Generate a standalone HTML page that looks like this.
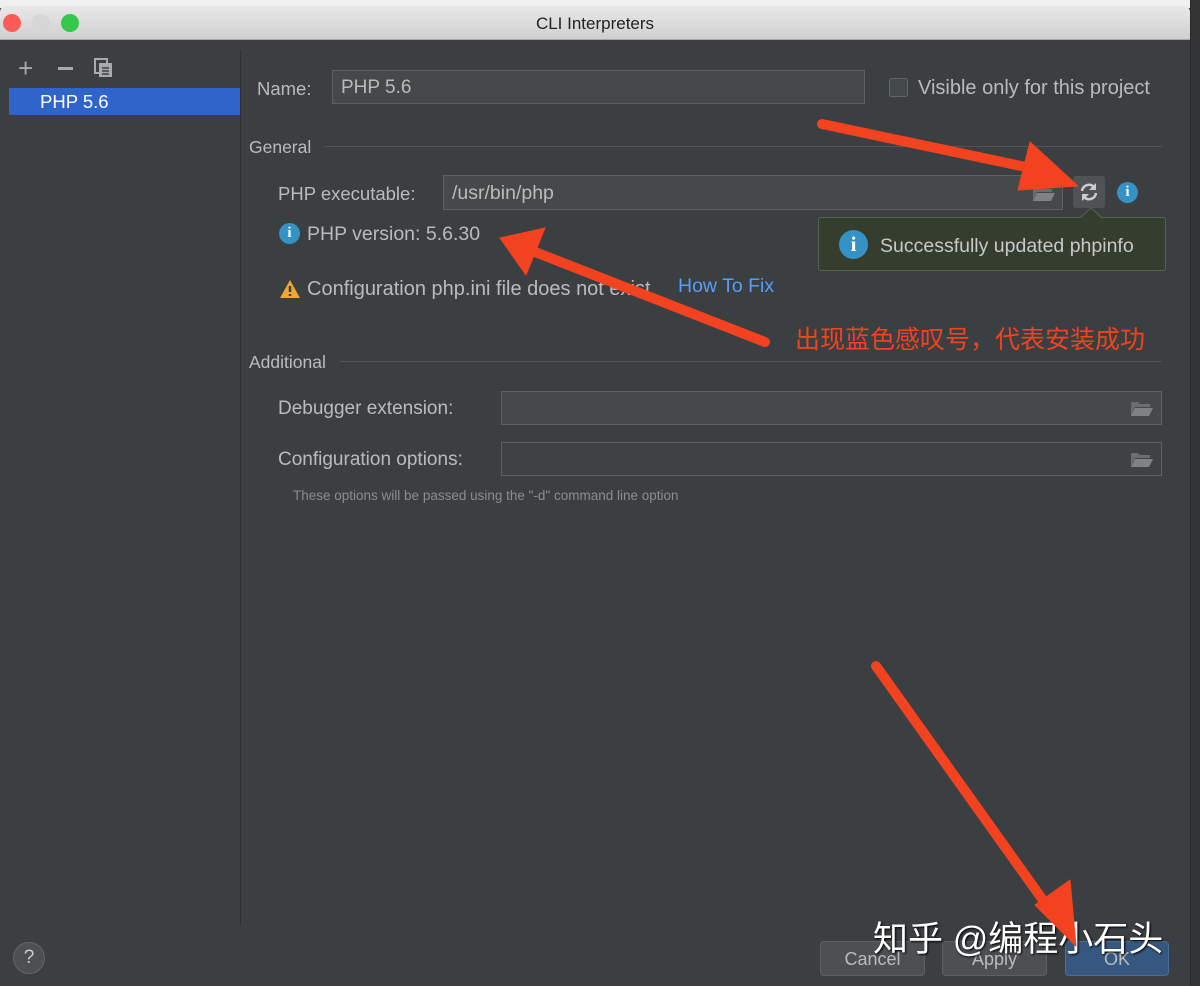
<!DOCTYPE html>
<html><head><meta charset="utf-8"><style>
*{margin:0;padding:0;box-sizing:border-box}
body{width:1200px;height:986px;overflow:hidden;background:#3c3f41;font-family:"Liberation Sans","Noto Sans CJK SC",sans-serif;color:#bbbbbb;position:relative}
.abs{position:absolute}
.title{left:0;top:6px;width:1190px;height:34px;background:linear-gradient(#e8e8e8,#d0d0d0);border-bottom:1px solid #a8a8a8;text-align:center;font-size:17px;color:#222;line-height:36px;border-radius:6px 6px 0 0}
.dot{width:18px;height:18px;border-radius:50%;top:14px}
.field{background:#45494a;border:1px solid #5e6163}
.lbl{font-size:18.5px;color:#bbbbbb}
.btn{top:941px;height:35px;border:1px solid #5e6163;border-radius:4px;background:#4c5052;font-size:18px;color:#bbb;text-align:center;line-height:35px}
</style></head><body>
<div class="abs" style="left:0;top:0;width:1200px;height:8px;background:#f0f0f0"></div>
<div class="abs" style="left:1190px;top:0;width:10px;height:986px;background:#323436;border-left:1px solid #2a2a2a"></div>
<div class="abs title">CLI Interpreters</div>
<div class="abs dot" style="left:3px;background:#fc5b57"></div>
<div class="abs dot" style="left:32px;background:#d6d6d6"></div>
<div class="abs dot" style="left:61px;background:#35c84a"></div>
<div class="abs" style="left:240px;top:50px;width:1px;height:875px;background:#2d2f30"></div>
<div class="abs" style="left:18px;top:55px;font-size:26px;color:#aaa;line-height:26px">+</div>
<div class="abs" style="left:58px;top:67px;width:15px;height:3px;background:#aaa"></div>
<svg class="abs" style="left:94px;top:58px" width="20" height="20"><rect x="1" y="1" width="12" height="14" fill="none" stroke="#aaa" stroke-width="2"/><rect x="5" y="5" width="13" height="14" fill="#aaa"/><path d="M8 10h7M8 13h7M8 16h7" stroke="#3c3f41" stroke-width="1.5"/></svg>
<div class="abs" style="left:9px;top:88px;width:231px;height:27px;background:#2f65ca;color:#fff;font-size:18.5px;line-height:27px;padding-left:31px">PHP 5.6</div>
<div class="abs" style="left:13px;top:942px;width:32px;height:32px;border-radius:50%;border:1px solid #666;background:#4c5052;text-align:center;line-height:30px;font-size:19px;color:#ccc">?</div>
<div class="abs lbl" style="left:257px;top:78px">Name:</div>
<div class="abs field" style="left:332px;top:70px;width:533px;height:34px;font-size:19px;line-height:34px;padding-left:8px">PHP 5.6</div>
<div class="abs" style="left:889px;top:78px;width:19px;height:19px;border:1px solid #666;border-radius:3px;background:#43494a"></div>
<div class="abs lbl" style="left:918px;top:77px;font-size:20px">Visible only for this project</div>
<div class="abs lbl" style="left:249px;top:137px;font-size:17.5px">General</div>
<div class="abs" style="left:324px;top:146px;width:838px;height:1px;background:#555"></div>
<div class="abs lbl" style="left:278px;top:183px">PHP executable:</div>
<div class="abs field" style="left:443px;top:175px;width:620px;height:35px;font-size:19.5px;line-height:35px;padding-left:8px">/usr/bin/php</div>
<svg class="abs" style="left:1032px;top:184px" width="24" height="18"><path d="M1 3h7l2 2h10v3H5L1 17z" fill="#6a6d70"/><path d="M5 9h18l-4 8H1z" fill="#808386"/></svg>
<div class="abs" style="left:1073px;top:176px;width:32px;height:32px;background:#4f5356;border-radius:3px"></div>
<svg class="abs" style="left:1078px;top:181px" width="22" height="22"><path d="M4 10a7 7 0 0 1 12-4" stroke="#ccc" stroke-width="2.5" fill="none"/><path d="M18 2v7h-7z" fill="#ccc"/><path d="M18 12a7 7 0 0 1-12 4" stroke="#ccc" stroke-width="2.5" fill="none"/><path d="M4 20v-7h7z" fill="#ccc"/></svg>
<div class="abs" style="left:1117px;top:182px;width:21px;height:21px;border-radius:50%;background:#3592c4;color:#fff;text-align:center;font-weight:bold;font-size:15px;line-height:21px;font-family:'Liberation Serif',serif">i</div>
<div class="abs" style="left:818px;top:217px;width:348px;height:54px;background:#353d2f;border:1px solid #5a6350;border-radius:3px"></div>
<svg class="abs" style="left:1080px;top:207px" width="24" height="12"><path d="M0 11L11 1 22 11" fill="#353d2f" stroke="#5a6350"/></svg>
<div class="abs" style="left:839px;top:230px;width:29px;height:29px;border-radius:50%;background:#3592c4;color:#fff;text-align:center;font-weight:bold;font-size:21px;line-height:29px;font-family:'Liberation Serif',serif">i</div>
<div class="abs lbl" style="left:880px;top:235px;font-size:19.5px;color:#c8c8c8">Successfully updated phpinfo</div>
<div class="abs" style="left:279px;top:223px;width:21px;height:21px;border-radius:50%;background:#3592c4;color:#fff;text-align:center;font-weight:bold;font-size:15px;line-height:21px;font-family:'Liberation Serif',serif">i</div>
<div class="abs lbl" style="left:307px;top:223px;font-size:19.5px">PHP version: 5.6.30</div>
<svg class="abs" style="left:279px;top:279px" width="22" height="20"><path d="M11 1L21 19H1z" fill="#f0a732"/><path d="M11 7v6M11 15v2" stroke="#3c3f41" stroke-width="2.5"/></svg>
<div class="abs lbl" style="left:307px;top:278px;font-size:20px">Configuration php.ini file does not exist</div>
<div class="abs" style="left:678px;top:275px;font-size:19.5px;color:#589df6">How To Fix</div>
<div class="abs lbl" style="left:249px;top:352px;font-size:17.5px">Additional</div>
<div class="abs" style="left:340px;top:361px;width:822px;height:1px;background:#555"></div>
<div class="abs lbl" style="left:278px;top:398px;font-size:19px">Debugger extension:</div>
<div class="abs field" style="left:501px;top:391px;width:661px;height:34px"></div>
<div class="abs lbl" style="left:278px;top:449px;font-size:19px">Configuration options:</div>
<div class="abs field" style="left:501px;top:442px;width:661px;height:34px;background:#3f4244"></div>
<svg class="abs" style="left:1130px;top:399px" width="24" height="18"><path d="M1 3h7l2 2h10v3H5L1 17z" fill="#6a6d70"/><path d="M5 9h18l-4 8H1z" fill="#808386"/></svg>
<svg class="abs" style="left:1130px;top:450px" width="24" height="18"><path d="M1 3h7l2 2h10v3H5L1 17z" fill="#6a6d70"/><path d="M5 9h18l-4 8H1z" fill="#808386"/></svg>
<div class="abs" style="left:293px;top:488px;font-size:13.5px;color:#8c8c8c">These options will be passed using the "-d" command line option</div>
<div class="abs btn" style="left:820px;width:105px">Cancel</div>
<div class="abs btn" style="left:942px;width:105px">Apply</div>
<div class="abs btn" style="left:1065px;width:104px;background:#365880;border-color:#4a6d9a">OK</div>
<div class="abs" style="left:795px;top:320px;font-size:25px;color:#f2421f">出现蓝色感叹号，代表安装成功</div>
<div class="abs" style="left:873px;top:911px;font-size:35px;color:#fff;text-shadow:1px 1px 2px #000">知乎 @编程小石头</div>
<svg class="abs" style="left:0;top:0" width="1200" height="986">
<g fill="#f2421f" stroke="#f2421f" stroke-linejoin="round" stroke-linecap="round">
<path d="M822 124L1040 170" stroke-width="10"/><path d="M1030 142L1078 186L1018 190Z"/>
<path d="M765 342L530 250" stroke-width="10"/><path d="M500 238L545 228L526 275Z"/>
<path d="M876 666L1050 910" stroke-width="10"/><path d="M1076 946L1070 880L1035 905Z"/>
</g></svg>
</body></html>
